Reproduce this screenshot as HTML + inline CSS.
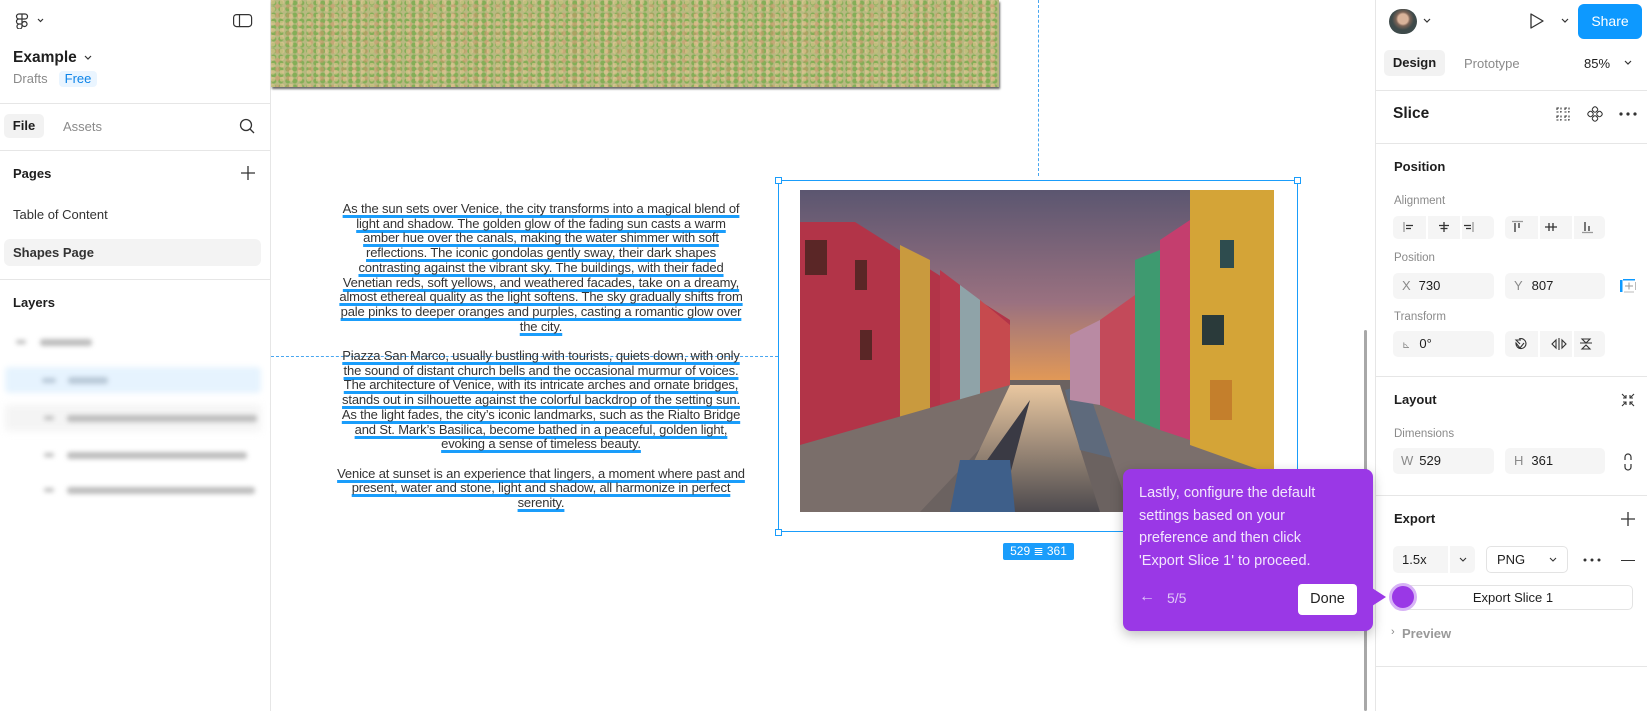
<!DOCTYPE html>
<html><head><meta charset="utf-8"><style>
*{margin:0;padding:0;box-sizing:border-box}
body{width:1647px;height:711px;overflow:hidden;background:#fff;font-family:"Liberation Sans",sans-serif;color:#1e1e1e;position:relative}
.a{position:absolute}
.b{font-weight:bold}
.g{color:#8a8a8a}
.hr{position:absolute;height:1px;background:#e6e6e6}
.inp{position:absolute;height:26px;background:#f5f5f5;border-radius:5px;font-size:13px;line-height:26px}
.lbl{position:absolute;font-size:11.5px;color:#8a8a8a}
.tx{position:absolute;left:326px;width:430px;text-align:center;font-size:13px;letter-spacing:-0.15px;line-height:14.7px;color:#333}
.tx span{text-decoration:underline;text-decoration-color:#1a9dfb;text-decoration-thickness:2.5px;text-underline-offset:2px;text-decoration-skip-ink:none;word-spacing:0}
.blur{position:absolute;height:7px;background:#bdbdbd;border-radius:3px;filter:blur(2.5px)}
</style></head><body>

<!-- LEFT SIDEBAR -->
<div class="a" style="left:0;top:0;width:271px;height:711px;background:#fff;border-right:1px solid #e6e6e6"></div>
<svg class="a" style="left:14px;top:13px" width="30" height="16" viewBox="0 0 30 16"><g fill="none" stroke="#333" stroke-width="1.2"><path d="M5 1h3v5H5a2.5 2.5 0 0 1 0-5zM8 1h3a2.5 2.5 0 0 1 0 5H8zM5 6h3v5H5a2.5 2.5 0 0 1 0-5zM10.5 8.5a2.5 2.5 0 1 1-.01 0zM5 11h3v2.5A2.5 2.5 0 1 1 5 11z"/><path d="M24 6l2.5 2.5L29 6"/></g></svg>
<svg class="a" style="left:233px;top:14px" width="20" height="14"><rect x="0.6" y="0.6" width="18" height="12" rx="3" fill="none" stroke="#333" stroke-width="1.2"/><line x1="6.5" y1="1" x2="6.5" y2="13" stroke="#333" stroke-width="1.2"/></svg>
<div class="a b" style="left:13px;top:49px;font-size:15.5px">Example</div>
<svg class="a" style="left:84px;top:55px" width="8" height="6"><path d="M1 1l3 3 3-3" fill="none" stroke="#333" stroke-width="1.2"/></svg>
<div class="a g" style="left:13px;top:71px;font-size:13px">Drafts</div>
<div class="a" style="left:59px;top:71px;width:38px;height:16px;background:#eaf5ff;border-radius:4px;color:#0d84e8;font-size:13px;line-height:16px;text-align:center">Free</div>
<div class="hr" style="left:0;top:103px;width:271px"></div>
<div class="a" style="left:4px;top:114px;width:40px;height:24px;background:#f2f2f2;border-radius:5px;font-size:13px;font-weight:bold;line-height:24px;text-align:center">File</div>
<div class="a g" style="left:63px;top:119px;font-size:13px">Assets</div>
<svg class="a" style="left:239px;top:118px" width="16" height="16"><circle cx="7" cy="7" r="5.5" fill="none" stroke="#333" stroke-width="1.3"/><path d="M11 11l4 4" stroke="#333" stroke-width="1.3"/></svg>
<div class="hr" style="left:0;top:150px;width:271px"></div>
<div class="a b" style="left:13px;top:166px;font-size:13px">Pages</div>
<svg class="a" style="left:241px;top:166px" width="14" height="14"><path d="M7 0v14M0 7h14" stroke="#333" stroke-width="1.3"/></svg>
<div class="a" style="left:13px;top:207px;font-size:13px;color:#333">Table of Content</div>
<div class="a" style="left:4px;top:239px;width:257px;height:27px;background:#f3f3f3;border-radius:6px"></div>
<div class="a" style="left:13px;top:245px;font-size:13px;font-weight:bold;color:#333">Shapes Page</div>
<div class="hr" style="left:0;top:279px;width:271px"></div>
<div class="a b" style="left:13px;top:295px;font-size:13px">Layers</div>
<div class="blur" style="left:16px;top:340px;width:10px;height:4px"></div>
<div class="blur" style="left:40px;top:339px;width:52px"></div>
<div class="a" style="left:5px;top:367px;width:256px;height:26px;background:#e6f3fe;filter:blur(3px);border-radius:4px"></div>
<div class="blur" style="left:42px;top:378px;width:14px;height:5px;background:#b9c9d8"></div>
<div class="blur" style="left:68px;top:377px;width:40px;background:#b9c9d8"></div>
<div class="a" style="left:5px;top:405px;width:256px;height:26px;background:#f4f4f4;filter:blur(4px)"></div>
<div class="blur" style="left:44px;top:416px;width:10px;height:4px"></div>
<div class="blur" style="left:67px;top:415px;width:190px"></div>
<div class="blur" style="left:44px;top:453px;width:10px;height:4px"></div>
<div class="blur" style="left:67px;top:452px;width:180px"></div>
<div class="blur" style="left:44px;top:488px;width:10px;height:4px"></div>
<div class="blur" style="left:67px;top:487px;width:188px"></div>

<!-- CANVAS -->
<div class="a" style="left:271px;top:0;width:728px;height:87px;background:
radial-gradient(circle at 20% 30%,rgba(230,200,150,.6) 0 2px,transparent 3px) 0 0/9px 7px,
radial-gradient(circle at 60% 70%,rgba(210,150,110,.5) 0 2px,transparent 3px) 0 0/11px 9px,
radial-gradient(circle at 40% 50%,rgba(110,170,70,.7) 0 2px,transparent 3px) 0 0/7px 6px,
#b8b981;box-shadow:1px 2px 2px rgba(0,0,0,.6)"></div>
<div class="a" style="left:1038px;top:0;height:176px;border-left:1px dashed #49a6f0"></div>
<div class="a" style="left:271px;top:356px;width:507px;border-top:1px dashed #49a6f0"></div>

<div class="tx" style="top:202px">
<span>As the sun sets over Venice, the city transforms into a magical blend of</span><br><span>light and shadow. The golden glow of the fading sun casts a warm</span><br><span>amber hue over the canals, making the water shimmer with soft</span><br><span>reflections. The iconic gondolas gently sway, their dark shapes</span><br><span>contrasting against the vibrant sky. The buildings, with their faded</span><br><span>Venetian reds, soft yellows, and weathered facades, take on a dreamy,</span><br><span>almost ethereal quality as the light softens. The sky gradually shifts from</span><br><span>pale pinks to deeper oranges and purples, casting a romantic glow over</span><br><span>the city.</span><br><br>
<span>Piazza San Marco, usually bustling with tourists, quiets down, with only</span><br><span>the sound of distant church bells and the occasional murmur of voices.</span><br><span>The architecture of Venice, with its intricate arches and ornate bridges,</span><br><span>stands out in silhouette against the colorful backdrop of the setting sun.</span><br><span>As the light fades, the city’s iconic landmarks, such as the Rialto Bridge</span><br><span>and St. Mark’s Basilica, become bathed in a peaceful, golden light,</span><br><span>evoking a sense of timeless beauty.</span><br><br>
<span>Venice at sunset is an experience that lingers, a moment where past and</span><br><span>present, water and stone, light and shadow, all harmonize in perfect</span><br><span>serenity.</span>
</div>

<!-- selection -->
<div class="a" style="left:778px;top:180px;width:520px;height:352px;border:1px solid #1a9dfb"></div>
<div class="a" style="left:775px;top:177px;width:7px;height:7px;border:1px solid #1a9dfb;background:#fff"></div>
<div class="a" style="left:1294px;top:177px;width:7px;height:7px;border:1px solid #1a9dfb;background:#fff"></div>
<div class="a" style="left:775px;top:529px;width:7px;height:7px;border:1px solid #1a9dfb;background:#fff"></div>
<svg class="a" style="left:800px;top:190px" width="474" height="322" viewBox="0 0 474 322" preserveAspectRatio="none">
<defs><linearGradient id="sky" x1="0" y1="0" x2="0" y2="1"><stop offset="0" stop-color="#5b5670"/><stop offset=".35" stop-color="#9a7180"/><stop offset=".6" stop-color="#e49a55"/><stop offset=".75" stop-color="#f2a23a"/><stop offset=".85" stop-color="#bfa68a"/></linearGradient>
<linearGradient id="wat" x1="0" y1="0" x2="0" y2="1"><stop offset="0" stop-color="#e9c7a0"/><stop offset="1" stop-color="#4d4a4e"/></linearGradient></defs>
<rect width="474" height="322" fill="url(#sky)"/>
<rect y="190" width="474" height="132" fill="#6b6260"/>
<polygon points="0,32 55,32 210,130 210,200 0,255" fill="#b23448"/>
<polygon points="100,55 130,70 130,240 100,250" fill="#c99a3e"/>
<polygon points="140,80 160,95 160,220 140,225" fill="#b9384c"/>
<polygon points="160,95 180,110 180,210 160,215" fill="#8fa3a8"/>
<polygon points="180,110 210,135 210,195 180,205" fill="#c64a4e"/>
<polygon points="0,255 210,195 240,195 120,322 0,322" fill="#7a6e6a"/>
<polygon points="210,195 260,195 300,322 150,322" fill="url(#wat)"/>
<polygon points="150,322 230,210 200,322" fill="#3a3a44"/>
<polygon points="160,270 210,270 215,322 150,322" fill="#3e5f8a"/>
<polygon points="265,200 300,190 330,230 320,270 280,260" fill="#5e6a7c"/>
<polygon points="290,205 474,250 474,322 330,322" fill="#7b6f6c"/>
<polygon points="270,145 300,130 300,215 270,210" fill="#b98aa3"/>
<polygon points="300,130 335,105 335,230 300,215" fill="#c34a5a"/>
<polygon points="335,70 360,60 360,240 335,230" fill="#3e9a70"/>
<polygon points="360,50 390,30 390,250 360,240" fill="#c43e6e"/>
<polygon points="390,0 474,0 474,285 390,255" fill="#d4a437"/>
<rect x="402" y="125" width="22" height="30" fill="#2a3a3a"/><rect x="420" y="50" width="14" height="28" fill="#2e4c4e"/>
<rect x="5" y="50" width="22" height="35" fill="#5a2626"/><rect x="55" y="70" width="12" height="30" fill="#5a2626"/><rect x="60" y="140" width="12" height="30" fill="#5a2626"/>
<rect x="410" y="190" width="22" height="40" fill="#c47f2c"/>
</svg>
<div class="a" style="left:1003px;top:543px;width:71px;height:17px;background:#1a9dfb;border-radius:2px;color:#fff;font-size:12px;line-height:17px;text-align:center">529 ≣ 361</div>

<!-- scrollbar -->
<div class="a" style="left:1364px;top:330px;width:3px;height:381px;background:#a8a8a8;border-radius:2px"></div>

<!-- RIGHT PANEL -->
<div class="a" style="left:1375px;top:0;width:272px;height:711px;background:#fff;border-left:1px solid #e6e6e6"></div>
<div class="a" style="left:1389px;top:9px;width:28px;height:25px;border-radius:13px;background:radial-gradient(circle at 50% 40%,#d9b39a 0 5px,#7b6356 7px,#3e4a4a 11px)"></div>
<svg class="a" style="left:1423px;top:18px" width="8" height="6"><path d="M1 1l3 3 3-3" fill="none" stroke="#333" stroke-width="1.2"/></svg>
<svg class="a" style="left:1529px;top:12px" width="16" height="18"><path d="M2 2l12 7-12 7z" fill="none" stroke="#333" stroke-width="1.3" stroke-linejoin="round"/></svg>
<svg class="a" style="left:1561px;top:18px" width="8" height="6"><path d="M1 1l3 3 3-3" fill="none" stroke="#333" stroke-width="1.2"/></svg>
<div class="a" style="left:1578px;top:4px;width:64px;height:35px;background:#0d99ff;border-radius:6px;color:#fff;font-size:14px;line-height:35px;text-align:center">Share</div>
<div class="a" style="left:1384px;top:50px;width:61px;height:26px;background:#f2f2f2;border-radius:5px;font-size:13px;font-weight:bold;line-height:26px;text-align:center">Design</div>
<div class="a g" style="left:1464px;top:56px;font-size:13px">Prototype</div>
<div class="a" style="left:1584px;top:56px;font-size:13px">85%</div>
<svg class="a" style="left:1624px;top:60px" width="8" height="6"><path d="M1 1l3 3 3-3" fill="none" stroke="#333" stroke-width="1.2"/></svg>
<div class="hr" style="left:1376px;top:90px;width:271px"></div>
<div class="a b" style="left:1393px;top:105px;font-size:15.5px">Slice</div>
<svg class="a" style="left:1556px;top:107px" width="14" height="14"><g fill="none" stroke="#333" stroke-width="1.1" stroke-dasharray="2 1.5"><rect x="1" y="1" width="4" height="4"/><rect x="9" y="1" width="4" height="4"/><rect x="1" y="9" width="4" height="4"/><rect x="9" y="9" width="4" height="4"/></g></svg>
<svg class="a" style="left:1587px;top:106px" width="16" height="16"><g fill="none" stroke="#333" stroke-width="1.1"><rect x="5.5" y="1" width="5" height="5" rx="2" transform="rotate(45 8 3.5)"/><rect x="5.5" y="10" width="5" height="5" rx="2" transform="rotate(45 8 12.5)"/><rect x="1" y="5.5" width="5" height="5" rx="2" transform="rotate(45 3.5 8)"/><rect x="10" y="5.5" width="5" height="5" rx="2" transform="rotate(45 12.5 8)"/></g></svg>
<svg class="a" style="left:1618px;top:111px" width="20" height="6"><circle cx="3" cy="3" r="1.6" fill="#333"/><circle cx="10" cy="3" r="1.6" fill="#333"/><circle cx="17" cy="3" r="1.6" fill="#333"/></svg>
<div class="hr" style="left:1376px;top:143px;width:271px"></div>
<div class="a b" style="left:1394px;top:159px;font-size:13px">Position</div>
<div class="lbl" style="left:1394px;top:195px">Alignment</div>
<div class="inp" style="left:1393px;top:216px;width:101px;height:23px"></div>
<div class="inp" style="left:1505px;top:216px;width:100px;height:23px"></div>
<div class="a" style="left:1426px;top:216px;width:2px;height:23px;background:#fff"></div>
<div class="a" style="left:1460px;top:216px;width:2px;height:23px;background:#fff"></div>
<div class="a" style="left:1538px;top:216px;width:2px;height:23px;background:#fff"></div>
<div class="a" style="left:1572px;top:216px;width:2px;height:23px;background:#fff"></div>
<svg class="a" style="left:1394px;top:217px" width="211" height="20"><g stroke="#333" stroke-width="1.3" fill="none">
<path d="M10 5v10" stroke="#999"/><path d="M12 8.5h7M12 11.5h5"/>
<path d="M45 8.5h10M46.5 11.5h7M50 5v10"/>
<path d="M79 5v10" stroke="#999"/><path d="M70 8.5h7M72 11.5h5"/>
<path d="M118 4.5h11" stroke="#999"/><path d="M121 6v9M125 6v5"/>
<path d="M151 10h12M155 6v8M159 6v8"/>
<path d="M188 15.5h11" stroke="#999"/><path d="M191 5v9M195 9v5"/></g></svg>
<div class="lbl" style="left:1394px;top:252px">Position</div>
<div class="inp" style="left:1393px;top:273px;width:101px"><span class="g" style="margin-left:9px">X</span><span style="margin-left:8px">730</span></div>
<div class="inp" style="left:1505px;top:273px;width:100px"><span class="g" style="margin-left:9px">Y</span><span style="margin-left:9px">807</span></div>
<svg class="a" style="left:1619px;top:278px" width="18" height="16"><rect x="1" y="2" width="2.5" height="12" fill="#0d99ff"/><rect x="4" y="1" width="12" height="1.5" fill="#0d99ff"/><path d="M6 8h8M10 4.5v7" stroke="#999" stroke-width="1"/><path d="M5 14h10" stroke="#bbb"/><path d="M16.5 4v8" stroke="#bbb"/></svg>
<div class="lbl" style="left:1394px;top:311px">Transform</div>
<div class="inp" style="left:1393px;top:331px;width:101px"><span class="g" style="margin-left:9px;font-size:10px">⊾</span><span style="margin-left:9px">0°</span></div>
<div class="inp" style="left:1505px;top:331px;width:100px"></div>
<div class="a" style="left:1538px;top:331px;width:2px;height:26px;background:#fff"></div>
<div class="a" style="left:1572px;top:331px;width:2px;height:26px;background:#fff"></div>
<svg class="a" style="left:1504px;top:334px" width="101" height="20"><g stroke="#333" stroke-width="1.1" fill="none"><path d="M16 10l-4-4h5"/><path d="M15 6a5 5 0 1 1-3 4l4 5 4-5" transform="translate(0 -1)"/>
<path d="M52 6v8l-4-4zM58 6v8l4-4zM55 4v12"/><path d="M76 9h12M78 5h8l-4 4zM78 15h8l-4-4z"/></g></svg>
<div class="hr" style="left:1376px;top:376px;width:271px"></div>
<div class="a b" style="left:1394px;top:392px;font-size:13px">Layout</div>
<svg class="a" style="left:1621px;top:393px" width="14" height="14"><g stroke="#333" stroke-width="1.1" fill="none"><path d="M1 1l4 4M5 2v3H2M13 1l-4 4M9 2v3h3M1 13l4-4M5 12V9H2M13 13l-4-4M9 12V9h3"/></g></svg>
<div class="lbl" style="left:1394px;top:428px">Dimensions</div>
<div class="inp" style="left:1393px;top:448px;width:101px"><span class="g" style="margin-left:8px">W</span><span style="margin-left:6px">529</span></div>
<div class="inp" style="left:1505px;top:448px;width:100px"><span class="g" style="margin-left:9px">H</span><span style="margin-left:8px">361</span></div>
<svg class="a" style="left:1623px;top:452px" width="10" height="20"><path d="M2 8V5a3 3 0 0 1 6 0v3M2 12v3a3 3 0 0 0 6 0v-3" fill="none" stroke="#333" stroke-width="1.2"/></svg>
<div class="hr" style="left:1376px;top:495px;width:271px"></div>
<div class="a b" style="left:1394px;top:511px;font-size:13px">Export</div>
<svg class="a" style="left:1621px;top:512px" width="14" height="14"><path d="M7 0v14M0 7h14" stroke="#333" stroke-width="1.3"/></svg>
<div class="inp" style="left:1393px;top:546px;width:82px;height:27px;line-height:27px"><span style="margin-left:9px">1.5x</span></div>
<div class="a" style="left:1448px;top:546px;width:2px;height:27px;background:#fff"></div>
<svg class="a" style="left:1459px;top:557px" width="8" height="6"><path d="M1 1l3 3 3-3" fill="none" stroke="#333" stroke-width="1.1"/></svg>
<div class="a" style="left:1486px;top:546px;width:82px;height:27px;border:1px solid #e3e3e3;border-radius:5px;font-size:13px;line-height:25px;padding-left:10px">PNG</div>
<svg class="a" style="left:1549px;top:557px" width="8" height="6"><path d="M1 1l3 3 3-3" fill="none" stroke="#333" stroke-width="1.1"/></svg>
<svg class="a" style="left:1582px;top:557px" width="20" height="6"><circle cx="3" cy="3" r="1.5" fill="#333"/><circle cx="10" cy="3" r="1.5" fill="#333"/><circle cx="17" cy="3" r="1.5" fill="#333"/></svg>
<div class="a" style="left:1621px;top:560px;width:14px;height:1.3px;background:#333"></div>
<div class="a" style="left:1393px;top:585px;width:240px;height:25px;border:1px solid #e3e3e3;border-radius:5px;font-size:13px;line-height:23px;text-align:center">Export Slice 1</div>
<div class="a" style="left:1389px;top:583px;width:28px;height:28px;border-radius:14px;background:#9a38e6;border:3px solid #d7b3f6"></div>
<div class="a g" style="left:1391px;top:626px;font-size:11px">›</div>
<div class="a" style="left:1402px;top:626px;font-size:13px;font-weight:bold;color:#999">Preview</div>
<div class="hr" style="left:1376px;top:666px;width:271px"></div>

<!-- tooltip (above panel) -->
<div class="a" style="left:1123px;top:469px;width:250px;height:162px;background:#9a38e6;border-radius:8px;box-shadow:0 4px 12px rgba(0,0,0,.25)"></div>
<div class="a" style="left:1372px;top:588px;width:0;height:0;border-top:9px solid transparent;border-bottom:9px solid transparent;border-left:14px solid #9a38e6"></div>
<div class="a" style="left:1139px;top:482px;width:230px;color:#f2e6fd;font-size:14.5px;line-height:22.5px">Lastly, configure the default<br>settings based on your<br>preference and then click<br>'Export Slice 1' to proceed.</div>
<div class="a" style="left:1139px;top:588px;color:#e0c8f7;font-size:16px">←</div>
<div class="a" style="left:1167px;top:590px;color:#e0c8f7;font-size:14px">5/5</div>
<div class="a" style="left:1298px;top:584px;width:59px;height:31px;background:#fff;border-radius:4px;font-size:14.5px;line-height:31px;text-align:center;color:#222">Done</div>
</body></html>
